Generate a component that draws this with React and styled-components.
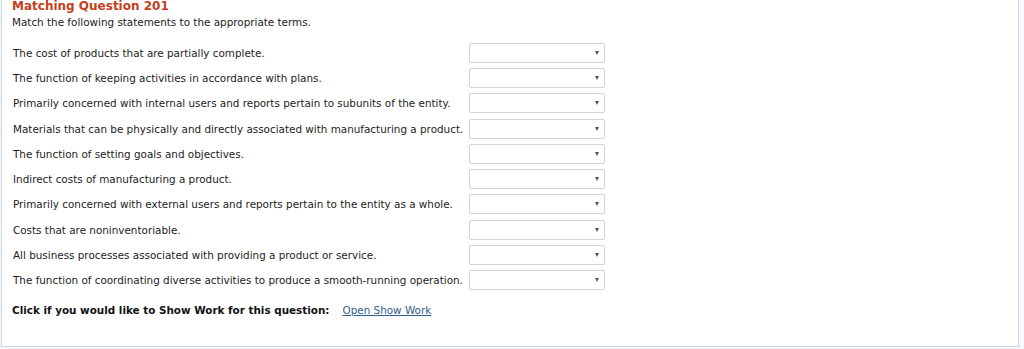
import React from "react";
import styled, { createGlobalStyle } from "styled-components";

const GlobalStyle = createGlobalStyle`
  html, body {
    margin: 0;
    padding: 0;
    background: #f5f8fc;
    font-family: "DejaVu Sans", Verdana, sans-serif;
  }
`;

const Page = styled.div`
  width: 1024px;
  height: 349px;
  overflow: hidden;
  display: flex;
  background: #f5f8fc;
`;

const Panel = styled.div`
  margin-left: 1px;
  width: 1018px;
  height: 347px;
  background: #fff;
  border: 1px solid #cfd7e2;
  border-top: none;
  box-sizing: border-box;
  padding: 0 0 0 10px;
`;

const Title = styled.div`
  color: #c4401b;
  font-weight: bold;
  font-size: 12px;
  line-height: 13px;
  margin-top: 0;
`;

const Prompt = styled.div`
  color: #222;
  font-size: 10.4px;
  line-height: 14px;
  margin-top: 2px;
`;

const Table = styled.table`
  border-collapse: collapse;
  margin-top: 11px;
  margin-left: 1px;
`;

const Row = styled.tr`
  height: 25.3px;
`;

const Statement = styled.td`
  font-size: 10.4px;
  color: #1c1c1c;
  padding: 0 6px 0 0;
  white-space: nowrap;
  vertical-align: middle;
`;

const Cell = styled.td`
  padding: 0;
  vertical-align: middle;
`;

const Select = styled.div`
  width: 136px;
  height: 20px;
  box-sizing: border-box;
  border: 1px solid #d3d3d3;
  border-radius: 2px;
  display: flex;
  align-items: center;
  justify-content: flex-end;
  padding-right: 5px;
  background: #fff;
`;

const Arrow = styled.span`
  width: 0;
  height: 0;
  border-left: 2.5px solid transparent;
  border-right: 2.5px solid transparent;
  border-top: 4px solid #555;
`;

const Footer = styled.div`
  display: flex;
  align-items: baseline;
  margin-top: 11px;
  font-size: 10.4px;
`;

const FooterLabel = styled.span`
  font-weight: bold;
  color: #111;
`;

const Link = styled.a`
  margin-left: 13px;
  color: #2d5e8e;
  text-decoration: underline;
`;

const statements = [
  "The cost of products that are partially complete.",
  "The function of keeping activities in accordance with plans.",
  "Primarily concerned with internal users and reports pertain to subunits of the entity.",
  "Materials that can be physically and directly associated with manufacturing a product.",
  "The function of setting goals and objectives.",
  "Indirect costs of manufacturing a product.",
  "Primarily concerned with external users and reports pertain to the entity as a whole.",
  "Costs that are noninventoriable.",
  "All business processes associated with providing a product or service.",
  "The function of coordinating diverse activities to produce a smooth-running operation.",
];

export default function App() {
  return (
    <>
      <GlobalStyle />
      <Page>
        <Panel>
          <Title>Matching Question 201</Title>
          <Prompt>Match the following statements to the appropriate terms.</Prompt>
          <Table>
            <tbody>
              {statements.map((s) => (
                <Row key={s}>
                  <Statement>{s}</Statement>
                  <Cell>
                    <Select>
                      <Arrow />
                    </Select>
                  </Cell>
                </Row>
              ))}
            </tbody>
          </Table>
          <Footer>
            <FooterLabel>Click if you would like to Show Work for this question:</FooterLabel>
            <Link href="#">Open Show Work</Link>
          </Footer>
        </Panel>
      </Page>
    </>
  );
}
